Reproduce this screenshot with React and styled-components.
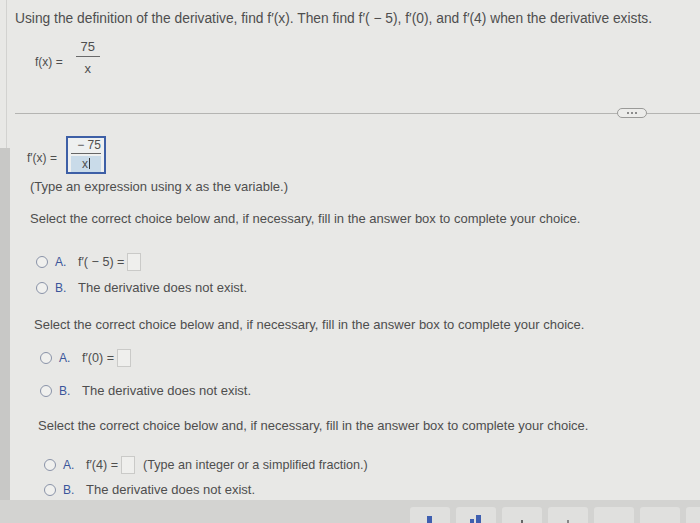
import React from "react"
import styled, { createGlobalStyle } from "styled-components"

const Global = createGlobalStyle`
  html, body { margin: 0; padding: 0; }
  body {
    background: #e7e7e5;
    font-family: "Liberation Sans", Arial, sans-serif;
    color: #4e4e4e;
  }
`

const Screen = styled.div`
  width: 700px;
  height: 523px;
  display: flex;
  flex-direction: column;
  overflow: hidden;
  background: #e8e8e6;
`

const Body = styled.div`
  flex: 1;
  display: flex;
  min-height: 0;
`

const Rail = styled.div`
  width: 10px;
  flex: 0 0 10px;
  display: flex;
  flex-direction: column;
`

const RailTop = styled.div`
  flex: 0 0 148px;
  width: 6px;
  border-right: 1px solid #d2d2d0;
`

const RailBlock = styled.div`
  flex: 1;
  background: #c8c8c6;
`

const Content = styled.div`
  flex: 1;
  padding: 11px 0 0 5px;
  font-size: 13px;
  line-height: 16px;
`

const Question = styled.div`
  white-space: nowrap;
  font-size: 13.8px;
`

const FormulaRow = styled.div`
  display: flex;
  align-items: flex-start;
  margin: 13px 0 0 20px;
`

const FormulaLabel = styled.span`
  margin: 14px 13px 0 0;
  font-size: 12px;
`

const Fraction = styled.div`
  display: flex;
  flex-direction: column;
  align-items: center;
  width: 24px;
`

const Num = styled.span`
  line-height: 14px;
  margin-bottom: 2px;
`

const Bar = styled.span`
  align-self: stretch;
  height: 1px;
  background: #6a6a6a;
`

const Den = styled.span`
  line-height: 14px;
  margin-top: 5px;
`

const Divider = styled.div`
  display: flex;
  align-items: center;
  margin-top: 32px;
  height: 10px;
`

const Rule = styled.div`
  flex: ${p => (p.$grow ? 1 : "0 0 53px")};
  height: 1px;
  background: #b4b4b2;
`

const Pill = styled.div`
  width: 28px;
  height: 8px;
  border: 1px solid #9a9a98;
  border-radius: 5px;
  display: flex;
  align-items: center;
  justify-content: center;
  gap: 2px;
  background: #ececea;
`

const Dot = styled.span`
  width: 2px;
  height: 2px;
  border-radius: 50%;
  background: #6c6c6c;
`

const AnswerRow = styled.div`
  display: flex;
  align-items: center;
  margin: 18px 0 0 12px;
`

const AnswerLabel = styled.span`
  font-size: 12px;
  padding-top: 5px;
  margin-right: 9px;
`

const AnswerBox = styled.div`
  width: 36px;
  height: 34px;
  border: 2px solid #3d5fa6;
  display: flex;
  flex-direction: column;
  background: #eef0f0;
`

const AnswerTop = styled.div`
  height: 15px;
  line-height: 15px;
  text-align: right;
  padding-right: 3px;
  font-size: 12px;
`

const AnswerBar = styled.div`
  height: 1px;
  margin: 0 3px;
  background: #666;
`

const AnswerBottom = styled.div`
  flex: 1;
  background: #c9dbe9;
  margin: 2px 3px 0;
  text-align: center;
  line-height: 16px;
  font-size: 12px;
`

const Caret = styled.span`
  display: inline-block;
  width: 1px;
  height: 11px;
  background: #333;
  vertical-align: -1px;
  margin-left: 1px;
`

const Line = styled.div`
  margin-top: ${p => p.$top}px;
  padding-left: ${p => p.$left}px;
  white-space: nowrap;
`

const OptionRow = styled.div`
  display: flex;
  align-items: center;
  height: 18px;
  margin-top: ${p => p.$top}px;
  padding-left: ${p => p.$left}px;
  white-space: nowrap;
`

const Radio = styled.span`
  width: 10px;
  height: 10px;
  border: 1px solid #8a93a8;
  border-radius: 50%;
  background: #f0f0ee;
  margin-right: 7px;
`

const Letter = styled.span`
  width: 23px;
  color: #3a559a;
  font-size: 12px;
`

const Expr = styled.span`
  font-size: 12.6px;
  margin-right: 3px;
`

const Blank = styled.span`
  width: 12px;
  height: 16px;
  border: 1px solid #cacac8;
  background: #efefed;
  margin-right: 8px;
`

const BottomBar = styled.div`
  height: 23px;
  flex: 0 0 23px;
  background: #d3d3d1;
  display: flex;
  align-items: flex-end;
  gap: 6px;
  padding-left: 410px;
`

const ToolButton = styled.div`
  width: 40px;
  height: 16px;
  flex: 0 0 40px;
  background: #e0e0de;
  border-radius: 3px 3px 0 0;
  display: flex;
  justify-content: center;
  align-items: flex-end;
`

const sections = [
  { top: 16, shift: 0, expr: "f\u2032( \u2212 5) =", gaps: [26, 8], hint: null },
  { top: 20, shift: 4, expr: "f\u2032(0) =", gaps: [16, 15], hint: null },
  { top: 18, shift: 8, expr: "f\u2032(4) =", gaps: [22, 7], hint: "(Type an integer or a simplified fraction.)" },
]

const prompt =
  "Select the correct choice below and, if necessary, fill in the answer box to complete your choice."

const Section = ({ top, shift, expr, gaps, hint }) => (
  <>
    <Line $top={top} $left={15 + shift}>{prompt}</Line>
    <OptionRow $top={gaps[0]} $left={21 + shift}>
      <Radio />
      <Letter>A.</Letter>
      <Expr>{expr}</Expr>
      <Blank />
      {hint && <Expr>{hint}</Expr>}
    </OptionRow>
    <OptionRow $top={gaps[1]} $left={21 + shift}>
      <Radio />
      <Letter>B.</Letter>
      <span>The derivative does not exist.</span>
    </OptionRow>
  </>
)

const icons = [
  <svg width="8" height="9" viewBox="0 0 8 9"><rect x="1" y="2" width="5" height="7" fill="#3f5fb0" /></svg>,
  <svg width="14" height="9" viewBox="0 0 14 9"><rect x="1" y="5" width="4" height="4" fill="#3f5fb0" /><rect x="7" y="1" width="5" height="8" fill="#3f5fb0" /></svg>,
  <svg width="8" height="9" viewBox="0 0 8 9"><rect x="3" y="6" width="2" height="3" fill="#666" /></svg>,
  <svg width="8" height="9" viewBox="0 0 8 9"><rect x="3" y="6" width="2" height="3" fill="#888" /></svg>,
  null,
  null,
  null,
]

const App = () => (
  <Screen>
    <Global />
    <Body>
      <Rail>
        <RailTop />
        <RailBlock />
      </Rail>
      <Content>
        <Question>
          Using the definition of the derivative, find f′(x). Then find f′( − 5), f′(0), and f′(4) when the derivative exists.
        </Question>
        <FormulaRow>
          <FormulaLabel>f(x) =</FormulaLabel>
          <Fraction>
            <Num>75</Num>
            <Bar />
            <Den>x</Den>
          </Fraction>
        </FormulaRow>
        <Divider>
          <Rule $grow />
          <Pill><Dot /><Dot /><Dot /></Pill>
          <Rule />
        </Divider>
        <AnswerRow>
          <AnswerLabel>f′(x) =</AnswerLabel>
          <AnswerBox>
            <AnswerTop>− 75</AnswerTop>
            <AnswerBar />
            <AnswerBottom>x<Caret /></AnswerBottom>
          </AnswerBox>
        </AnswerRow>
        <Line $top={5} $left={15}>(Type an expression using x as the variable.)</Line>
        {sections.map((s, i) => (
          <Section key={i} {...s} />
        ))}
      </Content>
    </Body>
    <BottomBar>
      {icons.map((icon, i) => (
        <ToolButton key={i}>{icon}</ToolButton>
      ))}
    </BottomBar>
  </Screen>
)

export default App
